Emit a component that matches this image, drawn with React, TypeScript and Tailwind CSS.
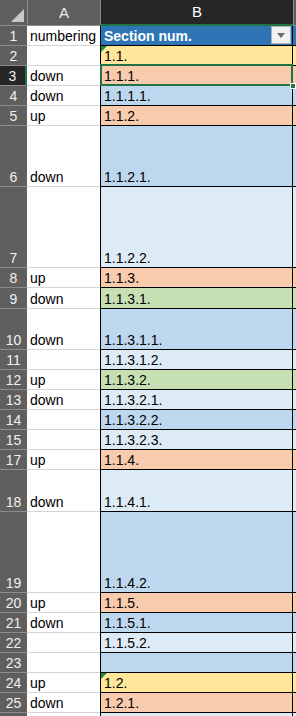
import React from 'react';

type Row = { n: number; h: number; a?: string; b?: string; bg: string; mark?: boolean };

const YEL = 'bg-[#ffe699]';
const PEA = 'bg-[#f8cbad]';
const BLU = 'bg-[#bdd7ee]';
const LBL = 'bg-[#ddebf7]';
const GRN = 'bg-[#c6e0b4]';

const rows: Row[] = [
  { n: 2, h: 20, b: '1.1.', bg: YEL, mark: true },
  { n: 3, h: 20, a: 'down', b: '1.1.1.', bg: PEA },
  { n: 4, h: 20, a: 'down', b: '1.1.1.1.', bg: BLU },
  { n: 5, h: 20, a: 'up', b: '1.1.2.', bg: PEA },
  { n: 6, h: 61, a: 'down', b: '1.1.2.1.', bg: BLU },
  { n: 7, h: 81, b: '1.1.2.2.', bg: LBL },
  { n: 8, h: 20, a: 'up', b: '1.1.3.', bg: PEA },
  { n: 9, h: 21, a: 'down', b: '1.1.3.1.', bg: GRN },
  { n: 10, h: 41, a: 'down', b: '1.1.3.1.1.', bg: BLU },
  { n: 11, h: 20, b: '1.1.3.1.2.', bg: LBL },
  { n: 12, h: 20, a: 'up', b: '1.1.3.2.', bg: GRN },
  { n: 13, h: 20, a: 'down', b: '1.1.3.2.1.', bg: LBL },
  { n: 14, h: 20, b: '1.1.3.2.2.', bg: BLU },
  { n: 15, h: 20, b: '1.1.3.2.3.', bg: LBL },
  { n: 17, h: 20, a: 'up', b: '1.1.4.', bg: PEA },
  { n: 18, h: 42, a: 'down', b: '1.1.4.1.', bg: LBL },
  { n: 19, h: 81, b: '1.1.4.2.', bg: BLU },
  { n: 20, h: 20, a: 'up', b: '1.1.5.', bg: PEA },
  { n: 21, h: 20, a: 'down', b: '1.1.5.1.', bg: BLU },
  { n: 22, h: 20, b: '1.1.5.2.', bg: LBL },
  { n: 23, h: 20, bg: BLU },
  { n: 24, h: 20, a: 'up', b: '1.2.', bg: YEL, mark: true },
  { n: 25, h: 20, a: 'down', b: '1.2.1.', bg: PEA },
];

function ErrMark() {
  return (
    <svg className="absolute left-0 top-0" width="6" height="6" viewBox="0 0 6 6">
      <polygon points="0,0 6,0 0,6" fill="#1e8a3a" />
    </svg>
  );
}

export default function App() {
  return (
    <div
      className="w-[296px] h-[716px] overflow-hidden bg-white text-[14px] leading-[18px] text-black"
      style={{ fontFamily: '"Liberation Sans", Arial, sans-serif' }}
    >
      {/* column headers */}
      <div className="flex h-[26px]">
        <div className="relative w-[27px] bg-[#5f5f5f] border-b border-[#8c8c8c]">
          <svg className="absolute right-[3px] bottom-[3px]" width="13" height="13" viewBox="0 0 13 13">
            <polygon points="13,0 13,13 0,13" fill="#c9c9c9" />
          </svg>
        </div>
        <div className="w-[73px] bg-[#5f5f5f] border-l border-b border-[#8c8c8c] flex items-center justify-center text-[#ececec] text-[15px]">
          A
        </div>
        <div className="w-[193px] bg-[#262626] border-l border-[#8c8c8c] border-b-2 border-b-[#217346] flex items-center justify-center text-white text-[15px]">
          B
        </div>
        <div className="w-[3px] bg-[#5f5f5f] border-l border-b border-[#8c8c8c]" />
      </div>

      {/* row 1 */}
      <div className="flex h-[20px]">
        <div className="w-[27px] bg-[#5f5f5f] border-b border-[#8c8c8c] text-[#f0f0f0] flex items-end justify-center">1</div>
        <div className="w-[73px] border-b border-[#d4d4d4] flex items-end pl-[3px] whitespace-nowrap overflow-hidden">numbering</div>
        <div className="w-[193px] bg-[#2e75b6] border-l border-r border-b border-black flex items-end pl-[3px] text-white font-bold">
          <span className="whitespace-nowrap">Section num.</span>
          <div className="ml-auto mr-px mb-px w-[20px] h-[18px] bg-[#f2f2f2] border border-[#b0b0b0] flex items-center justify-center">
            <svg width="8" height="5" viewBox="0 0 8 5">
              <polygon points="0,0 8,0 4,5" fill="#6b6b6b" />
            </svg>
          </div>
        </div>
        <div className="w-[3px] bg-[#2e75b6] border-b border-black" />
      </div>

      {rows.map((r) => {
        const sel = r.n === 3;
        return (
          <div key={r.n} className="flex" style={{ height: r.h }}>
            <div
              className={`w-[27px] border-b border-[#8c8c8c] text-[#f0f0f0] flex items-end justify-center ${
                sel ? 'bg-[#262626] border-r-2 border-r-[#217346]' : 'bg-[#5f5f5f]'
              }`}
            >
              {r.n}
            </div>
            <div className="w-[73px] border-b border-[#d4d4d4] flex items-end pl-[3px]">{r.a}</div>
            <div className={`relative w-[193px] ${r.bg} border-l border-r border-b border-black flex items-end pl-[3px]`}>
              {r.mark && <ErrMark />}
              {r.b}
              {sel && (
                <>
                  <div className="absolute -left-px -top-[2px] -right-px -bottom-px border-2 border-[#217346] z-10" />
                  <div className="absolute -right-[4px] -bottom-[4px] w-[6px] h-[6px] bg-[#217346] border border-white z-20" />
                </>
              )}
            </div>
            <div className={`w-[3px] ${r.bg} border-b border-black`} />
          </div>
        );
      })}

      {/* partial row 26 */}
      <div className="flex h-[20px]">
        <div className="w-[27px] bg-[#5f5f5f]" />
        <div className="w-[73px]" />
        <div className="w-[193px] bg-[#ddebf7] border-l border-r border-black" />
        <div className="w-[3px] bg-[#ddebf7]" />
      </div>
    </div>
  );
}
